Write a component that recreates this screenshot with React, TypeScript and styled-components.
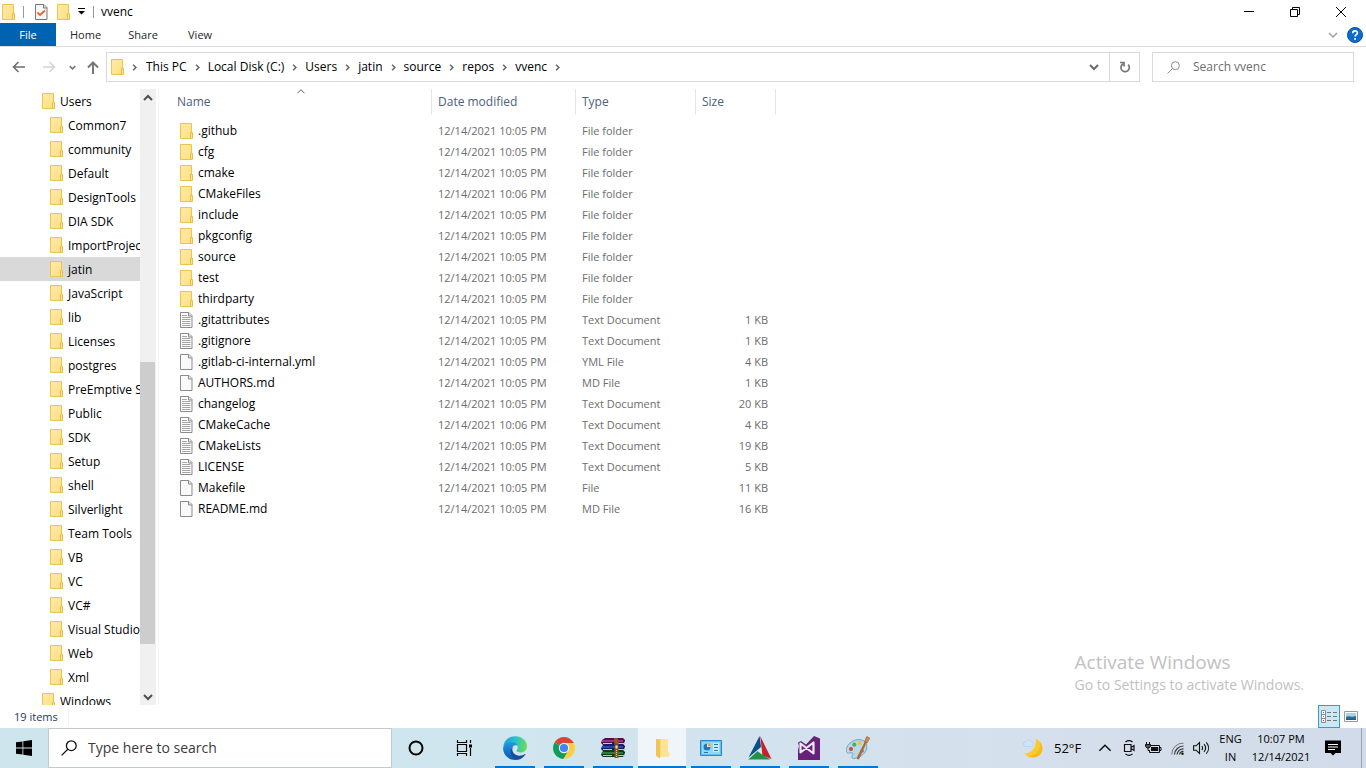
import React from 'react';
import styled, { createGlobalStyle } from 'styled-components';

const GlobalStyle = createGlobalStyle`
  *, *::before, *::after { box-sizing: border-box; }
  body { margin: 0; background: #fff; overflow: hidden; }
  body, button, input, table { font-family: "Open Sans", "Noto Sans", sans-serif; font-size: 12px; line-height: 16px; color: #000; }
  button { border: 0; padding: 0; background: none; cursor: default; }
  svg { display: block; flex: none; }
`;

/* ---------- shell ---------- */

const Desktop = styled.div`
  display: flex;
  flex-direction: column;
  height: 100vh;
`;

const TitleBar = styled.header`
  display: flex;
  align-items: center;
  flex: none;
  height: 23px;
  padding: 0 2px;
`;

const QuickButton = styled.button<{ $left: number }>`
  margin-left: ${p => p.$left}px;
`;

const Rule = styled.span<{ $left: number }>`
  width: 1px;
  height: 12px;
  margin-left: ${p => p.$left}px;
  background: #999;
`;

const WindowTitle = styled.h1`
  flex: 1;
  margin: 0 0 0 7px;
  font-size: 12px;
  font-weight: 400;
`;

const CaptionButton = styled.button`
  display: flex;
  align-items: center;
  justify-content: center;
  width: 46px;
  height: 21px;
`;

const TabBar = styled.nav`
  display: flex;
  gap: 1px;
  flex: none;
  height: 24px;
  border-bottom: 1px solid #dadbdc;
`;

const Tab = styled.button<{ $active?: boolean }>`
  min-width: 56px;
  padding: 0 13px;
  font-size: 11px;
  color: ${p => (p.$active ? '#fff' : '#262626')};
  background: ${p => (p.$active ? '#0063b1' : 'transparent')};
`;

const TabTools = styled.div`
  display: flex;
  align-items: center;
  gap: 9px;
  margin-left: auto;
  padding-right: 3px;
`;

const AddressRow = styled.div`
  display: flex;
  align-items: center;
  flex: none;
  height: 42px;
  padding: 0 12px 2px 4px;
`;

const NavButton = styled.button<{ $width: number }>`
  display: flex;
  align-items: center;
  justify-content: center;
  width: ${p => p.$width}px;
  height: 30px;
`;

const AddressBox = styled.div`
  display: flex;
  align-items: center;
  flex: 1;
  height: 30px;
  padding-left: 4px;
  border: 1px solid #d9d9d9;
`;

const Crumbs = styled.ol`
  display: flex;
  flex: 1;
  margin: 0;
  padding: 0 0 0 1px;
  list-style: none;
`;

const Crumb = styled.li`
  display: flex;
  align-items: center;
`;

const Separator = styled.span`
  display: flex;
  justify-content: center;
  width: 21px;
`;

const BoxButton = styled.button<{ $divided?: boolean }>`
  display: flex;
  align-items: center;
  justify-content: center;
  width: 30px;
  height: 28px;
  border-left: ${p => (p.$divided ? '1px solid #d9d9d9' : '0')};
`;

const SearchBox = styled.label`
  display: flex;
  align-items: center;
  gap: 13px;
  width: 202px;
  height: 30px;
  margin-left: 12px;
  padding: 0 14px;
  border: 1px solid #d9d9d9;
`;

const SearchInput = styled.input`
  flex: 1;
  min-width: 0;
  padding: 0;
  border: 0;
  outline: 0;
  background: none;
  &::placeholder { color: #6d6d6d; opacity: 1; }
`;

/* ---------- body ---------- */

const Body = styled.div`
  position: relative;
  display: flex;
  flex: 1;
  min-height: 0;
`;

const NavPane = styled.nav`
  flex: none;
  width: 140px;
  overflow: hidden;
`;

const Tree = styled.ul`
  margin: 0;
  padding: 0;
  list-style: none;
`;

const TreeLabel = styled.span`
  padding-top: 2px;
`;

const TreeButton = styled.button<{ $child?: boolean; $selected?: boolean }>`
  display: flex;
  align-items: center;
  gap: 5px;
  width: 140px;
  height: 24px;
  padding-left: ${p => (p.$child ? 50 : 42)}px;
  overflow: hidden;
  white-space: nowrap;
  background: ${p => (p.$selected ? '#d9d9d9' : 'transparent')};
`;

const ScrollTrack = styled.div`
  display: flex;
  flex-direction: column;
  flex: none;
  width: 16px;
  background: #f0f0f0;
`;

const ScrollArrow = styled.button`
  display: flex;
  align-items: center;
  justify-content: center;
  width: 15px;
  height: 17px;
`;

const ScrollSpace = styled.span<{ $grow: number }>`
  flex: ${p => p.$grow};
`;

const ScrollThumb = styled.span<{ $grow: number }>`
  flex: ${p => p.$grow};
  width: 15px;
  background: #cdcdcd;
`;

const FilePane = styled.main`
  flex: 1;
  margin-left: 2px;
  padding-left: 12px;
  border-left: 1px solid #f5f5f5;
`;

const FileTable = styled.table`
  border-collapse: collapse;
  table-layout: fixed;
  width: 605px;
`;

const HeadCell = styled.th<{ $width: number }>`
  width: ${p => p.$width}px;
  padding: 0 0 5px;
  font-weight: 400;
  text-align: left;
  color: #4c607a;
`;

const HeadLabel = styled.button`
  position: relative;
  display: flex;
  align-items: center;
  width: 100%;
  height: 26px;
  padding-left: 6px;
  border-right: 1px solid #e5e5e5;
  color: inherit;
`;

const SortMark = styled.span`
  position: absolute;
  top: -2px;
  left: 50%;
  transform: translateX(-50%);
`;

const Cell = styled.td<{ $right?: boolean }>`
  height: 21px;
  padding: 0 8px 0 6px;
  font-size: 11px;
  text-align: ${p => (p.$right ? 'right' : 'left')};
  white-space: nowrap;
  color: #6d6d6d;
`;

const FileName = styled.div`
  display: flex;
  align-items: center;
  gap: 5px;
  height: 18px;
  padding-left: 3px;
  font-size: 12px;
  color: #000;
`;

const Watermark = styled.aside`
  position: absolute;
  right: 62px;
  bottom: 10px;
  color: #c1c1c1;
`;

const WatermarkTitle = styled.p`
  margin: 0;
  font-size: 19px;
  line-height: 26px;
`;

const WatermarkText = styled.p`
  margin: 0;
  font-size: 14px;
  line-height: 20px;
`;

const StatusBar = styled.footer`
  display: flex;
  align-items: center;
  flex: none;
  height: 23px;
  padding: 0 4px 0 14px;
  font-size: 11px;
  color: #1e395b;
`;

const StatusText = styled.span`
  padding-right: 10px;
  margin-right: auto;
  border-right: 1px solid #f0f0f0;
`;

const ViewButton = styled.button<{ $on?: boolean }>`
  display: flex;
  align-items: center;
  justify-content: center;
  width: 22px;
  height: 23px;
  border: 1px solid ${p => (p.$on ? '#26a0da' : 'transparent')};
  background: ${p => (p.$on ? '#cbe8f6' : 'transparent')};
`;

/* ---------- taskbar ---------- */

const Taskbar = styled.div`
  display: flex;
  flex: none;
  height: 40px;
  background: linear-gradient(90deg, #cee5ee 0%, #d0e6ef 35%, #d3e2ee 60%, #d5dfeb 80%, #d1dbe9 100%);
`;

const TaskButton = styled.button`
  display: flex;
  align-items: center;
  justify-content: center;
  width: 48px;
`;

const TaskSearch = styled.label`
  display: flex;
  align-items: center;
  gap: 11px;
  width: 344px;
  padding-left: 12px;
  border: 1px solid #c4c9cc;
  background: #fff;
`;

const TaskInput = styled(SearchInput)`
  font-size: 14px;
  line-height: 20px;
  &::placeholder { color: #3b3b3b; }
`;

const Apps = styled.div`
  display: flex;
  gap: 1px;
  margin-left: 3px;
`;

const AppButton = styled(TaskButton)<{ $active?: boolean }>`
  flex-direction: column;
  padding-top: 2px;
  background: ${p => (p.$active ? '#f0f5f9' : 'transparent')};
  &::after {
    content: "";
    width: ${p => (p.$active ? 48 : 40)}px;
    height: 2px;
    background: #0078d7;
  }
`;

const AppIcon = styled.span`
  display: flex;
  align-items: center;
  flex: 1;
`;

const Tray = styled.div`
  display: flex;
  align-items: center;
  margin-left: auto;
`;

const TrayButton = styled.button<{ $width: number }>`
  display: flex;
  align-items: center;
  justify-content: center;
  width: ${p => p.$width}px;
  height: 40px;
`;

const Weather = styled.button`
  display: flex;
  align-items: center;
  gap: 11px;
  width: 70px;
  font-size: 13px;
`;

const Stacked = styled.button<{ $width: number }>`
  width: ${p => p.$width}px;
  font-size: 11px;
  line-height: 18px;
  white-space: pre;
`;

const ShowDesktop = styled.button`
  width: 5px;
  height: 40px;
  margin-left: 8px;
  border-left: 1px solid #9aa4b0;
`;

/* ---------- icons ---------- */

const FolderIcon = () => (
  <svg width="13" height="16" viewBox="0 0 13 16" aria-hidden="true">
    <defs>
      <linearGradient id="folderFill" x1="0" y1="0" x2="1" y2="1">
        <stop offset="0" stopColor="#ffeaa6" />
        <stop offset="1" stopColor="#ffe083" />
      </linearGradient>
    </defs>
    <path d="M.5.5h11v15H.5z" fill="url(#folderFill)" stroke="#ebc550" />
    <path d="M10.500 15.500V9.500h2v6z" fill="#ffe490" stroke="#e8bf45" />
  </svg>
);

const FileIcon = ({ lines }: { lines?: boolean }) => (
  <svg width="13" height="16" viewBox="0 0 13 16" aria-hidden="true">
    <path d="M.5.5h8.500l3 3v12H.5z" fill={lines ? '#fff' : '#fafafa'} stroke="#8b8b8b" />
    <path d="M8.500.5v3.500h3.500" fill="#e4e4e4" stroke="#8b8b8b" />
    {lines && <path d="M2 3.500h5M2 5.500h8.500M2 7.500h8.500M2 9.500h8.500M2 11.500h8.500M2 13.500h8.500" stroke="#a5a5a5" />}
  </svg>
);

const CheckedFile = () => (
  <svg width="13" height="16" viewBox="0 0 13 16" aria-hidden="true">
    <path d="M.5.5h8.500l3 3v12H.5z" fill="#f7f7f7" stroke="#777" />
    <path d="M8.500.5v3.500h3.500" fill="#ddd" stroke="#777" />
    <path d="M2.500 8.500l2.500 2.500 5-4.500" fill="none" stroke="#f0632c" strokeWidth="1.800" />
  </svg>
);

type ChevronProps = { dir: 'up' | 'down' | 'right'; size: number; color: string; weight?: number };
const chevrons = { up: 'M1 7l4-4 4 4', down: 'M1 3l4 4 4-4', right: 'M3 1l4 4-4 4' };
const Chevron = ({ dir, size, color, weight = 1 }: ChevronProps) => (
  <svg width={size} height={size} viewBox="0 0 10 10" fill="none" stroke={color} strokeWidth={(weight * 10) / size} aria-hidden="true">
    <path d={chevrons[dir]} />
  </svg>
);

const Arrow = ({ dir, color }: { dir: 'left' | 'right' | 'up'; color: string }) => (
  <svg width="14" height="14" viewBox="0 0 14 14" fill="none" stroke={color} strokeWidth={dir === 'up' ? 2 : 1.6} aria-hidden="true">
    {dir === 'left' && <path d="M13 7H1.500M6.500 2l-5 5 5 5" />}
    {dir === 'right' && <path d="M1 7h11.500M7.500 2l5 5-5 5" />}
    {dir === 'up' && <path d="M7 14V2.500M2 7.500l5-5 5 5" />}
  </svg>
);

const Magnifier = ({ size, color, weight }: { size: number; color: string; weight: number }) => (
  <svg width={size} height={size} viewBox="0 0 16 16" fill="none" stroke={color} strokeWidth={weight} aria-hidden="true">
    <circle cx="10.300" cy="5.700" r="4.900" />
    <path d="M6.800 9.200L.6 15.400" />
  </svg>
);

const RefreshIcon = () => (
  <svg width="12" height="12" viewBox="0 0 12 12" fill="none" stroke="#767676" strokeWidth="1.700" aria-hidden="true">
    <path d="M9.200 3.600A4.200 4.200 0 1 1 4.500 2.600" />
    <path d="M1 1.500h4V5.500" />
  </svg>
);

const HelpIcon = () => (
  <svg width="16" height="16" viewBox="0 0 16 16" aria-hidden="true">
    <circle cx="8" cy="8" r="7.500" fill="#0a6cce" stroke="#0a4f9c" />
    <path d="M5.700 6.200c0-3 4.700-3 4.700-.3 0 1.700-2.300 1.800-2.300 3.700" fill="none" stroke="#fff" strokeWidth="1.700" />
    <path d="M7.200 11h1.800v1.800H7.200z" fill="#fff" />
  </svg>
);

const StartIcon = () => (
  <svg width="16" height="16" viewBox="0 0 16 16" aria-hidden="true">
    <path d="M0 2.300l6.500-.9v6.100H0zM7.300 1.300L16 0v7.500H7.300zM0 8.400h6.500v6.200L0 13.700zM7.300 8.400H16V16l-8.700-1.200z" />
  </svg>
);

const TaskViewIcon = () => (
  <svg width="17" height="16" viewBox="0 0 17 16" fill="none" stroke="#000" aria-hidden="true">
    <path d="M1.500 4.500h9v7h-9zM1.500 0v2.500h9V0M1.500 16v-2.500h9V16M14.500 0v3M14.500 8v8" strokeWidth="1.200" />
    <path d="M13 4.500h3v3h-3z" fill="#000" stroke="none" />
  </svg>
);

const EdgeIcon = () => (
  <svg width="24" height="24" viewBox="0 0 24 24" aria-hidden="true">
    <defs>
      <linearGradient id="edgeTop" x1="0" y1=".4" x2="1" y2=".5">
        <stop offset="0" stopColor="#1c9fe0" /><stop offset=".5" stopColor="#2cc1c9" /><stop offset="1" stopColor="#6ade55" />
      </linearGradient>
      <linearGradient id="edgeSide" x1="0" y1="0" x2="0" y2="1">
        <stop offset="0" stopColor="#1d9be2" /><stop offset="1" stopColor="#0b57b0" />
      </linearGradient>
    </defs>
    <path d="M.3 10.800C1 4.500 6 .2 12.200.2 19 .2 24 5 24 10.200c0 3.800-3 6.300-6.300 6.300-2.900 0-4.200-1.200-4.200-2 0-.7 1.300-1.100 1.300-3 0-2.600-3-4.700-6.700-4.700-3.500 0-6.300 1.700-7.800 4z" fill="url(#edgeTop)" />
    <path d="M.2 11.300C1.800 7.200 5 6 8.100 6c3.500 0 6 1.800 6.700 3.800-3.500-1.600-6.600 1-6.600 4.500 0 4.800 4.500 8.600 9.200 7.700-1.600 1.200-3.400 1.900-5.400 1.900C5.200 23.900-.6 18.200.2 11.300z" fill="url(#edgeSide)" />
    <path d="M10.400 10.100c-3 4 .5 9.700 6 9.600 2.200 0 4-.8 5.500-1.700.5-.2.700.1.500.5-1.500 2.600-4 4.600-7 5.200-6.700-.2-11-8.700-5-13.600z" fill="#154e9c" />
  </svg>
);

const ChromeIcon = () => (
  <svg width="22" height="22" viewBox="0 0 22 22" aria-hidden="true">
    <path d="M11 11L1.500 5.500A11 11 0 0 1 20.500 5.500L21 6H11z" fill="#db4437" />
    <path d="M11 11L1.500 5.500A11 11 0 0 0 10.500 22L15.500 13.500z" fill="#109d58" />
    <path d="M11 6h9.800A11 11 0 0 1 10.500 22L15.500 13.500z" fill="#ffcd40" />
    <circle cx="11" cy="11" r="5.200" fill="#f4f4f4" />
    <circle cx="11" cy="11" r="4.100" fill="#4285f4" />
  </svg>
);

const bookRows = [
  { y: 1, cover: '#9c2f8c', dark: '#511044' },
  { y: 7, cover: '#2348b8', dark: '#101f6b' },
  { y: 13, cover: '#2c7b3f', dark: '#0d3d1b' },
];
const ArchiveIcon = () => (
  <svg width="24" height="20" viewBox="0 0 24 20" aria-hidden="true">
    {bookRows.map(b => (
      <g key={b.y}>
        <path d={`M1 ${b.y + 1}L4 ${b.y - 1}H22l2 2v1L22 ${b.y + 6}H2l-2-2z`} fill={b.dark} />
        <path d={`M1 ${b.y + 1}h21v2H1z`} fill={b.cover} />
        <path d={`M2 ${b.y + 4.5}h9M16 ${b.y + 4.5}h8`} stroke="#cfc3b4" />
      </g>
    ))}
    <path d="M13 0h3.500l1 4v16h-4V5z" fill="#8a5a24" />
    <path d="M14 7h3v4h-3z" fill="#f1d98a" stroke="#53340f" strokeWidth=".7" />
    <path d="M15.500 12v7" stroke="#e7c587" strokeDasharray="1 1" />
  </svg>
);

const OpenFolderIcon = () => (
  <svg width="15" height="21" viewBox="0 0 15 21" aria-hidden="true">
    <path d="M1 1h11.500v16l1.500 1.500H4L1 17z" fill="#f8cf67" />
    <path d="M5.500 1h7.500v12.500l1.500 1.500v3H5.500z" fill="#ffe394" />
    <path d="M1 1l4 1.500V20.500L1 18z" fill="#f3c354" />
  </svg>
);

const PanelIcon = () => (
  <svg width="22" height="16" viewBox="0 0 22 16" aria-hidden="true">
    <path d="M.5.5h21v15H.5z" fill="#62c1f0" stroke="#2a88c4" />
    <path d="M2 2h18v12H2z" fill="#8fd7f8" />
    <circle cx="7" cy="7" r="3.600" fill="#fff" />
    <path d="M7 7V3.400A3.600 3.600 0 1 0 10.600 7z" fill="#1b76bb" />
    <path d="M7.600 6.400V3a3.500 3.500 0 0 1 3.400 3.400z" fill="#f5a32b" />
    <path d="M13 4.500h6M13 7.500h6M13 10.500h6" stroke="#fff" strokeWidth="2" />
    <path d="M14 4.500h4M14 7.500h4M14 10.500h4M4 12.500h4" stroke="#2476b0" />
  </svg>
);

const TriangleIcon = () => (
  <svg width="24" height="24" viewBox="0 0 24 24" aria-hidden="true">
    <path d="M11.600 0L.5 21.500 13 11z" fill="#07508b" />
    <path d="M12.200 0L23.500 23 14.500 19.500z" fill="#c8202f" />
    <path d="M9.400 15.300L.3 23.500h22z" fill="#1f9246" />
    <path d="M13 11.400l-2.600 3.500 3.400 3.500z" fill="#dfe4ea" />
  </svg>
);

const StudioIcon = () => (
  <svg width="24" height="24" viewBox="0 0 24 24" aria-hidden="true">
    <path d="M17 0l6 2.500V24H1V14l1-4-1-3.500L4 5l5 3.500z" fill="#68217a" />
    <path d="M3.500 7.500v9l13-10v11z" fill="none" stroke="#e6ebf1" strokeWidth="2.200" strokeLinejoin="round" />
  </svg>
);

const PaletteIcon = () => (
  <svg width="24" height="24" viewBox="0 0 24 24" aria-hidden="true">
    <path d="M10 4C18 2 22 8 20.500 13c-1.500 6-8 9-12.500 9.500-2.500.2-2.500-2-1.500-3.500 1.500-2-.5-2.500-3-2-3 .5-3.800-1.500-3-4.500C1.500 8.500 5 5.200 10 4z" fill="#b7d9ea" stroke="#5b96b5" strokeWidth=".8" />
    <circle cx="5" cy="13" r="2" fill="#d4443e" />
    <circle cx="8.300" cy="8.700" r="2.100" fill="#54b04a" />
    <circle cx="13.500" cy="7" r="2" fill="#edc43c" />
    <circle cx="16" cy="15" r="1.800" fill="#4379cf" />
    <path d="M20 5.500L12.500 22l-.5 1 .2-2z" fill="none" stroke="#b3672a" strokeWidth="2" />
    <path d="M18.500 5.500l2.300-5 2.900 1.600-2.700 4.900z" fill="#c98b4f" stroke="#9b5b28" strokeWidth=".6" />
  </svg>
);

const MoonIcon = () => (
  <svg width="20" height="20" viewBox="0 0 20 20" aria-hidden="true">
    <path d="M12.500.8A9.600 9.600 0 1 1 1.500 15.200C9 16 14.500 8 12.500.8z" fill="#fccb2f" />
    <path d="M16.500 4c2 7-3 14.500-12 13.800 7 4 15 .5 15-7C19.500 8 18.500 5.500 16.500 4z" fill="#fbb91c" />
    <path d="M2.500 8.500a2.300 2.300 0 0 1 0-4.600A3.500 3.500 0 0 1 8.800 4a2.300 2.300 0 0 1-.3 4.500z" fill="#cfe4fa" stroke="#a9cef2" strokeWidth=".6" />
  </svg>
);

const MeetIcon = () => (
  <svg width="12" height="16" viewBox="0 0 12 16" fill="none" stroke="#111" strokeWidth="1.200" aria-hidden="true">
    <path d="M1.500 4.500h6.500v7H1.500zM8 7.500l3-2v5l-3-2M2.500 2c2-1.500 5-1.500 7 0M2.500 14c2 1.500 5 1.500 7 0" />
  </svg>
);

const BatteryIcon = () => (
  <svg width="17" height="12" viewBox="0 0 17 12" fill="none" stroke="#111" aria-hidden="true">
    <path d="M6 3.500h8.500v7h-10V8M14.500 5.500h1.500v3h-1.500" />
    <path d="M6 5h7.200v4H6z" fill="#111" stroke="none" />
    <path d="M1.500 0v2M4.500 0v2M3 6v2.500h2" />
    <path d="M.5 2.500h5v2L4 6H2L.5 4.500z" fill="#555" />
  </svg>
);

const WifiIcon = () => (
  <svg width="13" height="13" viewBox="0 0 13 13" fill="none" stroke="#333" aria-hidden="true">
    <path d="M.8 12.500A11 11 0 0 1 12.500 1.200" stroke="#777" />
    <path d="M3.500 12.500A9 9 0 0 1 12.500 4M6 12.500A6.500 6.500 0 0 1 12.500 6.800M8.500 12.500a4 4 0 0 1 4-3.200" strokeWidth="1.200" />
    <circle cx="11.500" cy="11.700" r="1.200" fill="#111" stroke="none" />
  </svg>
);

const SoundIcon = () => (
  <svg width="17" height="14" viewBox="0 0 17 14" fill="none" stroke="#111" strokeWidth="1.100" aria-hidden="true">
    <path d="M.6 4.800h2.500L6.500 1.500v11L3.100 9.200H.6zM8.800 5c1 1.200 1 2.800 0 4M11 3.200c2 2.300 2 5.300 0 7.600M13.300 1.300c3 3.400 3 8 0 11.400" />
  </svg>
);

const NotificationIcon = () => (
  <svg width="16" height="16" viewBox="0 0 16 16" aria-hidden="true">
    <path d="M0 .5h16V13h-5.500L8 15.500 5.500 13H0z" />
    <path d="M3 4.500h10M3 7h10M3 9.500h7" stroke="#fff" />
  </svg>
);

const DetailsIcon = () => (
  <svg width="16" height="13" viewBox="0 0 16 13" fill="none" aria-hidden="true">
    <path d="M.5.5h4v12h-4zM.5 4.500h4M.5 8.500h4" fill="#fff" stroke="#8a8a8a" />
    <path d="M2 2h1v1H2zM2 6h1v1H2z" fill="#2f74c0" />
    <path d="M2 10h1v1H2z" fill="#c22" />
    <path d="M6 2.500h4M12 2.500h4M6 6.500h4M12 6.500h4M6 10.500h4M12 10.500h4" stroke="#777" />
  </svg>
);

const PictureIcon = () => (
  <svg width="14" height="11" viewBox="0 0 14 11" aria-hidden="true">
    <path d="M.5.5h13v10H.5z" fill="#fff" stroke="#999" />
    <path d="M2 2h10v7H2z" fill="#a7d0f4" />
    <path d="M2 6c3-2 5 1 10-1v4H2z" fill="#2f6f86" />
    <path d="M2 8h10v1H2z" fill="#2256a8" />
  </svg>
);

/* ---------- data ---------- */

const treeItems = [
  'Users', 'Common7', 'community', 'Default', 'DesignTools', 'DIA SDK', 'ImportProjects', 'jatin',
  'JavaScript', 'lib', 'Licenses', 'postgres', 'PreEmptive Solutions', 'Public', 'SDK', 'Setup', 'shell',
  'Silverlight', 'Team Tools', 'VB', 'VC', 'VC#', 'Visual Studio', 'Web', 'Xml', 'Windows',
];
const rootItems = ['Users', 'Windows'];

const crumbs = ['This PC', 'Local Disk (C:)', 'Users', 'jatin', 'source', 'repos', 'vvenc'];

const columns = [
  { label: 'Name', width: 261 },
  { label: 'Date modified', width: 144 },
  { label: 'Type', width: 120 },
  { label: 'Size', width: 80 },
];

type Entry = { name: string; type: string; size?: string; time?: string };
const folder = (name: string, time?: string): Entry => ({ name, type: 'File folder', time });
const entries: Entry[] = [
  folder('.github'), folder('cfg'), folder('cmake'), folder('CMakeFiles', '10:06'), folder('include'),
  folder('pkgconfig'), folder('source'), folder('test'), folder('thirdparty'),
  { name: '.gitattributes', type: 'Text Document', size: '1 KB' },
  { name: '.gitignore', type: 'Text Document', size: '1 KB' },
  { name: '.gitlab-ci-internal.yml', type: 'YML File', size: '4 KB' },
  { name: 'AUTHORS.md', type: 'MD File', size: '1 KB' },
  { name: 'changelog', type: 'Text Document', size: '20 KB' },
  { name: 'CMakeCache', type: 'Text Document', size: '4 KB', time: '10:06' },
  { name: 'CMakeLists', type: 'Text Document', size: '19 KB' },
  { name: 'LICENSE', type: 'Text Document', size: '5 KB' },
  { name: 'Makefile', type: 'File', size: '11 KB' },
  { name: 'README.md', type: 'MD File', size: '16 KB' },
];

const apps = [
  { name: 'Microsoft Edge', icon: <EdgeIcon /> },
  { name: 'Google Chrome', icon: <ChromeIcon /> },
  { name: 'WinRAR', icon: <ArchiveIcon /> },
  { name: 'File Explorer', icon: <OpenFolderIcon />, active: true },
  { name: 'Control Panel', icon: <PanelIcon /> },
  { name: 'CMake', icon: <TriangleIcon /> },
  { name: 'Visual Studio', icon: <StudioIcon /> },
  { name: 'Paint', icon: <PaletteIcon /> },
];

export default function App() {
  return (
    <Desktop>
      <GlobalStyle />
      <TitleBar>
        <FolderIcon />
        <Rule $left={8} />
        <QuickButton $left={11} aria-label="Properties"><CheckedFile /></QuickButton>
        <QuickButton $left={9} aria-label="New folder"><FolderIcon /></QuickButton>
        <QuickButton $left={8} aria-label="Customize toolbar">
          <svg width="7" height="7" viewBox="0 0 7 7"><path d="M0 0h7v1H0zM0 3h7L3.500 6.500z" /></svg>
        </QuickButton>
        <Rule $left={8} />
        <WindowTitle>vvenc</WindowTitle>
        <CaptionButton aria-label="Minimize">
          <svg width="10" height="10" viewBox="0 0 10 10"><path d="M0 4.500h10" stroke="#000" /></svg>
        </CaptionButton>
        <CaptionButton aria-label="Restore">
          <svg width="10" height="10" viewBox="0 0 10 10" fill="none" stroke="#000"><path d="M.5 2.500h7v7h-7zM2.500 2.500v-2h7v7h-2" /></svg>
        </CaptionButton>
        <CaptionButton aria-label="Close">
          <svg width="10" height="10" viewBox="0 0 10 10" stroke="#000"><path d="M0 0l10 10M10 0L0 10" /></svg>
        </CaptionButton>
      </TitleBar>

      <TabBar>
        <Tab $active>File</Tab>
        <Tab>Home</Tab>
        <Tab>Share</Tab>
        <Tab>View</Tab>
        <TabTools>
          <button aria-label="Expand ribbon"><Chevron dir="down" size={10} color="#a0a0a0" weight={1.5} /></button>
          <button aria-label="Help"><HelpIcon /></button>
        </TabTools>
      </TabBar>

      <AddressRow>
        <NavButton $width={30} aria-label="Back"><Arrow dir="left" color="#6e6e6e" /></NavButton>
        <NavButton $width={30} aria-label="Forward"><Arrow dir="right" color="#d4d4d4" /></NavButton>
        <NavButton $width={16} aria-label="Recent locations"><Chevron dir="down" size={7} color="#777" weight={1.5} /></NavButton>
        <NavButton $width={26} aria-label="Up"><Arrow dir="up" color="#777" /></NavButton>
        <AddressBox>
          <FolderIcon />
          <Separator><Chevron dir="right" size={7} color="#666" weight={1.5} /></Separator>
          <Crumbs>
            {crumbs.map(c => (
              <Crumb key={c}>
                <button>{c}</button>
                <Separator><Chevron dir="right" size={7} color="#666" weight={1.5} /></Separator>
              </Crumb>
            ))}
          </Crumbs>
          <BoxButton aria-label="Previous locations"><Chevron dir="down" size={10} color="#6a6a6a" weight={2} /></BoxButton>
          <BoxButton $divided aria-label="Refresh"><RefreshIcon /></BoxButton>
        </AddressBox>
        <SearchBox>
          <Magnifier size={13} color="#8a8a8a" weight={1.2} />
          <SearchInput placeholder="Search vvenc" aria-label="Search vvenc" />
        </SearchBox>
      </AddressRow>

      <Body>
        <NavPane aria-label="Folders">
          <Tree>
            {treeItems.map(item => (
              <li key={item}>
                <TreeButton $child={!rootItems.includes(item)} $selected={item === 'jatin'}>
                  <FolderIcon />
                  <TreeLabel>{item}</TreeLabel>
                </TreeButton>
              </li>
            ))}
          </Tree>
        </NavPane>
        <ScrollTrack>
          <ScrollArrow aria-label="Scroll up"><Chevron dir="up" size={10} color="#505050" weight={2} /></ScrollArrow>
          <ScrollSpace $grow={256} />
          <ScrollThumb $grow={282} />
          <ScrollSpace $grow={44} />
          <ScrollArrow aria-label="Scroll down"><Chevron dir="down" size={10} color="#505050" weight={2} /></ScrollArrow>
        </ScrollTrack>
        <FilePane>
          <FileTable>
            <thead>
              <tr>
                {columns.map((c, i) => (
                  <HeadCell key={c.label} $width={c.width} scope="col">
                    <HeadLabel>
                      {c.label}
                      {i === 0 && <SortMark><Chevron dir="up" size={9} color="#666" /></SortMark>}
                    </HeadLabel>
                  </HeadCell>
                ))}
              </tr>
            </thead>
            <tbody>
              {entries.map(e => (
                <tr key={e.name}>
                  <Cell>
                    <FileName>
                      {e.type === 'File folder' ? <FolderIcon /> : <FileIcon lines={e.type === 'Text Document'} />}
                      {e.name}
                    </FileName>
                  </Cell>
                  <Cell>12/14/2021 {e.time ?? '10:05'} PM</Cell>
                  <Cell>{e.type}</Cell>
                  <Cell $right>{e.size}</Cell>
                </tr>
              ))}
            </tbody>
          </FileTable>
        </FilePane>
        <Watermark>
          <WatermarkTitle>Activate Windows</WatermarkTitle>
          <WatermarkText>Go to Settings to activate Windows.</WatermarkText>
        </Watermark>
      </Body>

      <StatusBar>
        <StatusText>19 items</StatusText>
        <ViewButton $on aria-label="Details view"><DetailsIcon /></ViewButton>
        <ViewButton aria-label="Large icons view"><PictureIcon /></ViewButton>
      </StatusBar>

      <Taskbar>
        <TaskButton aria-label="Start"><StartIcon /></TaskButton>
        <TaskSearch>
          <Magnifier size={16} color="#111" weight={1.3} />
          <TaskInput placeholder="Type here to search" aria-label="Type here to search" />
        </TaskSearch>
        <TaskButton aria-label="Cortana">
          <svg width="16" height="16" viewBox="0 0 16 16"><circle cx="8" cy="8" r="6.500" fill="none" stroke="#000" strokeWidth="2" /></svg>
        </TaskButton>
        <TaskButton aria-label="Task view"><TaskViewIcon /></TaskButton>
        <Apps>
          {apps.map(a => (
            <AppButton key={a.name} $active={a.active} aria-label={a.name}>
              <AppIcon>{a.icon}</AppIcon>
            </AppButton>
          ))}
        </Apps>
        <Tray>
          <Weather><MoonIcon />52°F</Weather>
          <TrayButton $width={24} aria-label="Hidden icons"><Chevron dir="up" size={14} color="#111" weight={1.5} /></TrayButton>
          <TrayButton $width={24} aria-label="Meet now"><MeetIcon /></TrayButton>
          <TrayButton $width={24} aria-label="Battery"><BatteryIcon /></TrayButton>
          <TrayButton $width={25} aria-label="Network"><WifiIcon /></TrayButton>
          <TrayButton $width={22} aria-label="Volume"><SoundIcon /></TrayButton>
          <Stacked $width={37}>{'ENG\nIN'}</Stacked>
          <Stacked $width={64}>{'10:07 PM\n12/14/2021'}</Stacked>
          <TrayButton $width={40} aria-label="Notifications"><NotificationIcon /></TrayButton>
          <ShowDesktop aria-label="Show desktop" />
        </Tray>
      </Taskbar>
    </Desktop>
  );
}
